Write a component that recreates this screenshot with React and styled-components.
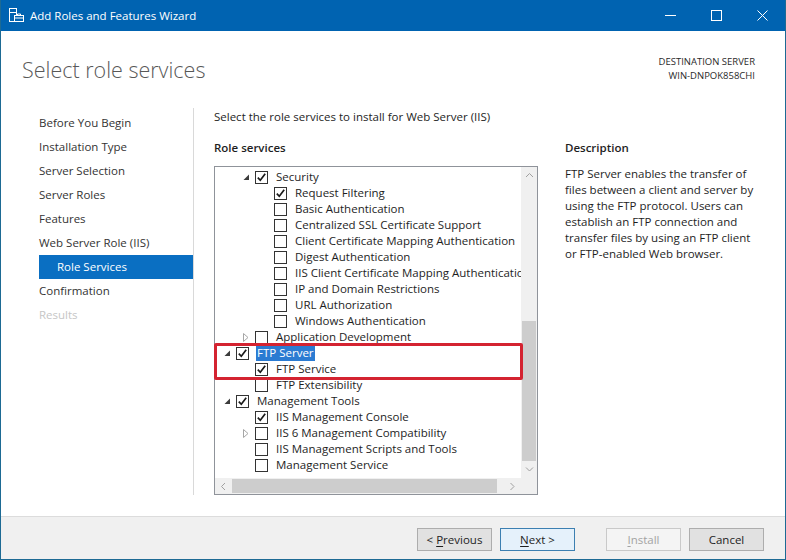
import React from "react";
import styled, { createGlobalStyle, css } from "styled-components";

const GlobalStyle = createGlobalStyle`
  html, body {
    margin: 0;
    padding: 0;
    background: #ffffff;
  }
  body {
    font-family: "Open Sans", "Noto Sans", sans-serif;
  }
`;

const treeItems = [
  { level: 1, expander: "open", checked: true, label: "Security" },
  { level: 2, checked: true, label: "Request Filtering" },
  { level: 2, label: "Basic Authentication" },
  { level: 2, label: "Centralized SSL Certificate Support" },
  { level: 2, label: "Client Certificate Mapping Authentication" },
  { level: 2, label: "Digest Authentication" },
  { level: 2, label: "IIS Client Certificate Mapping Authentication" },
  { level: 2, label: "IP and Domain Restrictions" },
  { level: 2, label: "URL Authorization" },
  { level: 2, label: "Windows Authentication" },
  { level: 1, expander: "closed", label: "Application Development" },
  { level: 0, expander: "open", checked: true, label: "FTP Server", selected: true },
  { level: 1, checked: true, label: "FTP Service" },
  { level: 1, label: "FTP Extensibility" },
  { level: 0, expander: "open", checked: true, label: "Management Tools" },
  { level: 1, checked: true, label: "IIS Management Console" },
  { level: 1, expander: "closed", label: "IIS 6 Management Compatibility" },
  { level: 1, label: "IIS Management Scripts and Tools" },
  { level: 1, label: "Management Service" },
];

const navItems = [
  { label: "Before You Begin" },
  { label: "Installation Type" },
  { label: "Server Selection" },
  { label: "Server Roles" },
  { label: "Features" },
  { label: "Web Server Role (IIS)" },
  { label: "Role Services", active: true },
  { label: "Confirmation" },
  { label: "Results", disabled: true },
];

const WizardIcon = () => (
  <svg width="17" height="17" viewBox="0 0 17 17" fill="none" stroke="#fff" strokeWidth="1">
    <rect x="1.5" y="1.5" width="7" height="13" />
    <line x1="1.5" y1="5.5" x2="8.5" y2="5.5" />
    <rect x="6.5" y="8.5" width="9" height="6" fill="#0063b1" />
    <path d="M9.5 8.5 V7 H12.5 V8.5" />
    <line x1="6.5" y1="11" x2="15.5" y2="11" />
  </svg>
);

const CheckMark = () => (
  <svg width="11" height="11" viewBox="0 0 11 11">
    <path d="M1.8 5.6 L4.3 8.3 L9.2 1.8" fill="none" stroke="#1a1a1a" strokeWidth="1.7" />
  </svg>
);

const Expander = ({ type }) => {
  if (type === "open") {
    return (
      <svg width="7" height="7" viewBox="0 0 7 7">
        <polygon points="6,0.5 6,6 0.5,6" fill="#3c3c3c" />
      </svg>
    );
  }
  if (type === "closed") {
    return (
      <svg width="6" height="9" viewBox="0 0 6 9">
        <polygon points="0.5,0.5 5,4.5 0.5,8.5" fill="none" stroke="#a6a6a6" strokeWidth="1" />
      </svg>
    );
  }
  return null;
};

const Chevron = ({ dir }) => {
  const paths = {
    up: "M1 5 L4.5 1.5 L8 5",
    down: "M1 1.5 L4.5 5 L8 1.5",
    left: "M5 1 L1.5 4.5 L5 8",
    right: "M1.5 1 L5 4.5 L1.5 8",
  };
  const vertical = dir === "up" || dir === "down";
  return (
    <svg width={vertical ? 9 : 7} height={vertical ? 7 : 9} viewBox={vertical ? "0 0 9 7" : "0 0 7 9"}>
      <path d={paths[dir]} fill="none" stroke="#a0a0a0" strokeWidth="1" />
    </svg>
  );
};

const App = () => {
  return (
    <>
      <GlobalStyle />
      <Window>
        <TitleBar>
          <TitleIcon>
            <WizardIcon />
          </TitleIcon>
          <TitleText>Add Roles and Features Wizard</TitleText>
          <WindowControls>
            <ControlButton>
              <svg width="11" height="11" viewBox="0 0 11 11">
                <line x1="0" y1="5.5" x2="11" y2="5.5" stroke="#fff" strokeWidth="1" />
              </svg>
            </ControlButton>
            <ControlButton>
              <svg width="11" height="11" viewBox="0 0 11 11">
                <rect x="0.5" y="0.5" width="10" height="10" fill="none" stroke="#fff" strokeWidth="1" />
              </svg>
            </ControlButton>
            <ControlButton>
              <svg width="11" height="11" viewBox="0 0 11 11">
                <path d="M0.5 0.5 L10.5 10.5 M10.5 0.5 L0.5 10.5" stroke="#fff" strokeWidth="1" />
              </svg>
            </ControlButton>
          </WindowControls>
        </TitleBar>

        <Header>
          <Heading>Select role services</Heading>
          <Destination>
            <div>DESTINATION SERVER</div>
            <div>WIN-DNPOK858CHI</div>
          </Destination>
        </Header>

        <Main>
          <Nav>
            {navItems.map((item) => (
              <NavItem key={item.label} $active={item.active} $disabled={item.disabled}>
                {item.label}
              </NavItem>
            ))}
          </Nav>

          <Content>
            <Intro>Select the role services to install for Web Server (IIS)</Intro>
            <Columns>
              <SectionLabel>Role services</SectionLabel>
              <SectionLabel>Description</SectionLabel>

              <TreeBox>
                <TreeRows>
                  {treeItems.map((item) => (
                    <TreeRow key={item.label} $level={item.level}>
                      <ExpanderSlot>
                        <Expander type={item.expander} />
                      </ExpanderSlot>
                      <CheckBox>{item.checked && <CheckMark />}</CheckBox>
                      <TreeLabel $selected={item.selected}>{item.label}</TreeLabel>
                    </TreeRow>
                  ))}
                </TreeRows>
                <VScroll>
                  <ScrollArrow $h={17}>
                    <Chevron dir="up" />
                  </ScrollArrow>
                  <VTrack>
                    <VThumb />
                  </VTrack>
                  <ScrollArrow $h={17}>
                    <Chevron dir="down" />
                  </ScrollArrow>
                </VScroll>
                <HScroll>
                  <ScrollArrow $w={17}>
                    <Chevron dir="left" />
                  </ScrollArrow>
                  <HTrack>
                    <HThumb />
                  </HTrack>
                  <ScrollArrow $w={17}>
                    <Chevron dir="right" />
                  </ScrollArrow>
                </HScroll>
                <ScrollCorner />
                <Callout />
              </TreeBox>

              <Description>
                FTP Server enables the transfer of files between a client and server by using the FTP
                protocol. Users can establish an FTP connection and transfer files by using an FTP
                client or FTP-enabled Web browser.
              </Description>
            </Columns>
          </Content>
        </Main>

        <Footer>
          <Button>
            &lt;&nbsp;<u>P</u>revious
          </Button>
          <Button $default>
            <u>N</u>ext&nbsp;&gt;
          </Button>
          <Button $disabled $gap>
            <u>I</u>nstall
          </Button>
          <Button>Cancel</Button>
        </Footer>
      </Window>
    </>
  );
};

const Window = styled.div`
  width: 786px;
  height: 560px;
  box-sizing: border-box;
  border: 1px solid #1d6a94;
  border-top: none;
  display: flex;
  flex-direction: column;
  background: #ffffff;
  overflow: hidden;
  font-family: "Open Sans", "Noto Sans", sans-serif;
  color: #1e1e1e;
`;

const TitleBar = styled.div`
  height: 31px;
  flex: none;
  background: #0063b1;
  display: flex;
  align-items: center;
  margin: 0 -1px;
  color: #ffffff;
`;

const TitleIcon = styled.div`
  width: 17px;
  height: 17px;
  margin-left: 8px;
  margin-right: 5px;
  display: flex;
`;

const TitleText = styled.div`
  font-size: 11.5px;
  flex: 1;
`;

const WindowControls = styled.div`
  display: flex;
  height: 100%;
`;

const ControlButton = styled.div`
  width: 45px;
  height: 100%;
  display: flex;
  align-items: center;
  justify-content: center;
  margin-right: 1px;
`;

const Header = styled.div`
  height: 77px;
  flex: none;
  display: flex;
  justify-content: space-between;
  padding: 0 30px 0 21px;
  box-sizing: border-box;
`;

const Heading = styled.h1`
  margin: 24px 0 0;
  font-size: 21.5px;
  font-weight: 300;
  line-height: 30px;
  color: #585858;
`;

const Destination = styled.div`
  margin-top: 24px;
  text-align: right;
  font-size: 9.5px;
  line-height: 14px;
  color: #2a2a2a;
`;

const Main = styled.div`
  flex: 1;
  display: flex;
  padding-bottom: 21px;
  min-height: 0;
`;

const Nav = styled.div`
  width: 193px;
  flex: none;
  border-right: 1px solid #d9d9d9;
  padding: 3px 0 0 38px;
  box-sizing: border-box;
`;

const NavItem = styled.div`
  height: 24px;
  line-height: 24px;
  font-size: 11.5px;
  color: #333333;
  ${(p) =>
    p.$active &&
    css`
      background: #0a6fc2;
      color: #ffffff;
      padding-left: 18px;
    `}
  ${(p) =>
    p.$disabled &&
    css`
      color: #c6c6c6;
    `}
`;

const Content = styled.div`
  flex: 1;
  padding: 1px 20px 0 20px;
  display: flex;
  flex-direction: column;
  min-width: 0;
`;

const Intro = styled.div`
  font-size: 11.5px;
  line-height: 16px;
  height: 16px;
`;

const Columns = styled.div`
  flex: 1;
  margin-top: 15px;
  display: grid;
  grid-template-columns: 324px 1fr;
  grid-template-rows: 16px 1fr;
  column-gap: 27px;
  row-gap: 10px;
  min-height: 0;
`;

const SectionLabel = styled.div`
  font-size: 11.5px;
  line-height: 16px;
  font-weight: 600;
  color: #1e1e1e;
`;

const TreeBox = styled.div`
  position: relative;
  border: 1px solid #8f939a;
  display: grid;
  grid-template-columns: 1fr 16px;
  grid-template-rows: 1fr 16px;
  min-height: 0;
`;

const TreeRows = styled.div`
  overflow: hidden;
  padding-top: 2px;
  min-width: 0;
`;

const TreeRow = styled.div`
  height: 16px;
  display: flex;
  align-items: center;
  padding-left: ${(p) => 5 + p.$level * 19}px;
  white-space: nowrap;
  font-size: 11.5px;
`;

const ExpanderSlot = styled.div`
  width: 14px;
  height: 16px;
  flex: none;
  display: flex;
  align-items: center;
  justify-content: center;
  margin-right: 2px;
`;

const CheckBox = styled.div`
  width: 13px;
  height: 13px;
  box-sizing: border-box;
  border: 1px solid #333333;
  background: #ffffff;
  flex: none;
  display: flex;
  align-items: center;
  justify-content: center;
  margin-right: 7px;
`;

const TreeLabel = styled.span`
  line-height: 16px;
  padding: 0 1px;
  color: #1e1e1e;
  ${(p) =>
    p.$selected &&
    css`
      background: #2b7bd2;
      color: #ffffff;
    `}
`;

const VScroll = styled.div`
  display: flex;
  flex-direction: column;
  background: #f0f0f0;
`;

const HScroll = styled.div`
  display: flex;
  background: #f0f0f0;
`;

const ScrollArrow = styled.div`
  flex: none;
  ${(p) => (p.$h ? `height: ${p.$h}px;` : "")}
  ${(p) => (p.$w ? `width: ${p.$w}px;` : "")}
  display: flex;
  align-items: center;
  justify-content: center;
`;

const VTrack = styled.div`
  flex: 1;
  display: flex;
  flex-direction: column;
  justify-content: flex-end;
  padding: 0 1px;
`;

const VThumb = styled.div`
  height: 140px;
  background: #cdcdcd;
`;

const HTrack = styled.div`
  flex: 1;
  display: flex;
  padding: 1px 0;
`;

const HThumb = styled.div`
  width: 265px;
  background: #cdcdcd;
`;

const ScrollCorner = styled.div`
  background: #f0f0f0;
`;

const Callout = styled.div`
  position: absolute;
  left: -1px;
  top: 176px;
  width: 309px;
  height: 37px;
  box-sizing: border-box;
  border: 3px solid #d42331;
  border-radius: 2px;
  pointer-events: none;
`;

const Description = styled.p`
  margin: 0;
  font-size: 11.5px;
  line-height: 16px;
  width: 192px;
  color: #1e1e1e;
`;

const Footer = styled.div`
  height: 43px;
  flex: none;
  background: #f0f0f0;
  border-top: 1px solid #dcdcdc;
  display: flex;
  align-items: center;
  justify-content: flex-end;
  padding: 0 21px 0 0;
  gap: 8px;
  box-sizing: border-box;
`;

const Button = styled.div`
  width: 75px;
  height: 23px;
  box-sizing: border-box;
  border: 1px solid #adadad;
  background: #e1e1e1;
  font-size: 11.5px;
  display: flex;
  align-items: center;
  justify-content: center;
  color: #1e1e1e;
  margin-top: 2px;
  ${(p) =>
    p.$default &&
    css`
      border-color: #3c7fb1;
      background: #e5f1fb;
    `}
  ${(p) =>
    p.$disabled &&
    css`
      border-color: #c9c9c9;
      background: #f4f4f4;
      color: #a3a3a3;
    `}
  ${(p) =>
    p.$gap &&
    css`
      margin-left: 23px;
    `}
  u {
    text-underline-offset: 2px;
  }
`;

export default App;
